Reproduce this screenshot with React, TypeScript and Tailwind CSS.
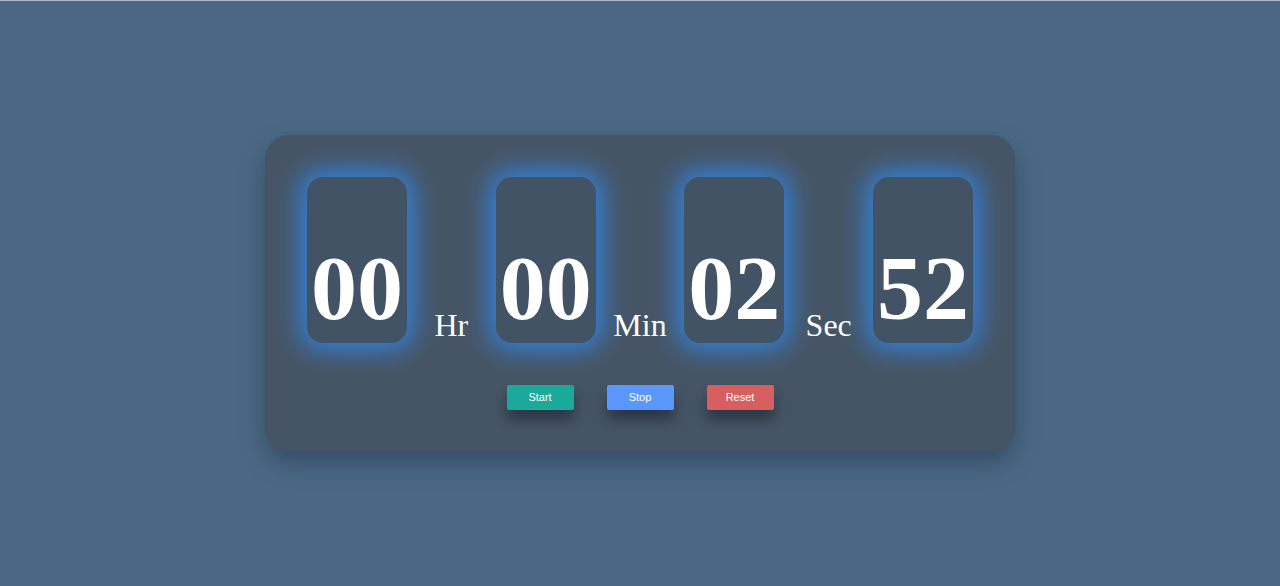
import React from 'react';

const serif = { fontFamily: '"Liberation Serif", "Times New Roman", serif' };

function Digit({ value }: { value: string }) {
  return (
    <div className="flex h-[166px] w-[100px] items-end justify-center rounded-2xl bg-[#435366] pb-[9px] shadow-[0_0_26px_6px_#3384e0]">
      <span className="text-[92px] font-bold leading-none text-white" style={serif}>
        {value}
      </span>
    </div>
  );
}

function Label({ text }: { text: string }) {
  return (
    <div className="flex w-[89px] items-end justify-center pb-[2px]">
      <span className="text-[32px] leading-none text-white" style={serif}>
        {text}
      </span>
    </div>
  );
}

export default function App() {
  return (
    <div className="flex h-[586px] w-full items-start justify-center border-t border-[#a9b8c8] bg-[#4a6884] pt-[134px]">
      <div className="flex w-[750px] flex-col items-center rounded-3xl bg-[#465566] px-[42px] pb-[41px] pt-[42px] shadow-[0_12px_24px_rgba(20,30,45,0.35)]">
        <div className="flex w-full">
          <Digit value="00" />
          <Label text="Hr" />
          <Digit value="00" />
          <Label text="Min" />
          <Digit value="02" />
          <Label text="Sec" />
          <Digit value="52" />
        </div>
        <div className="mt-[42px] flex gap-[33px]" style={{ fontFamily: '"Liberation Sans", Arial, sans-serif' }}>
          <button className="h-[25px] w-[67px] rounded-[2px] bg-[#1baa9a] text-[11px] text-white shadow-[0_10px_14px_rgba(20,28,40,0.55)]">
            Start
          </button>
          <button className="h-[25px] w-[67px] rounded-[2px] bg-[#5b97fb] text-[11px] text-white shadow-[0_10px_14px_rgba(20,28,40,0.55)]">
            Stop
          </button>
          <button className="h-[25px] w-[67px] rounded-[2px] bg-[#d85f5f] text-[11px] text-white shadow-[0_10px_14px_rgba(20,28,40,0.55)]">
            Reset
          </button>
        </div>
      </div>
    </div>
  );
}
